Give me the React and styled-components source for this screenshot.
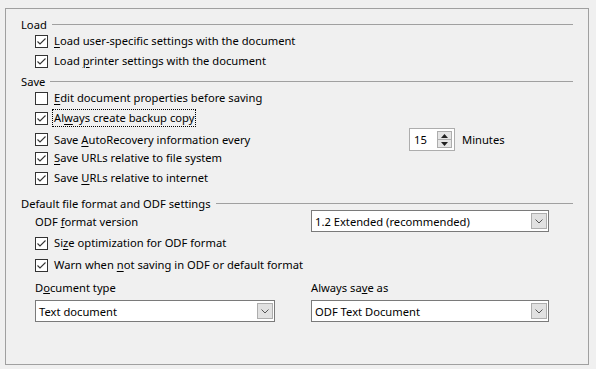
import React from "react";
import styled, { createGlobalStyle } from "styled-components";

const Global = createGlobalStyle`
  html, body {
    margin: 0;
    padding: 0;
    background: #f0f0f0;
  }
  body {
    font-family: "Noto Sans", "Open Sans", sans-serif;
    font-size: 11.2px;
    color: #000;
  }
`;

const Page = styled.div`
  width: 596px;
  height: 369px;
  box-sizing: border-box;
  padding: 8px 7px 4px 5px;
`;

const Frame = styled.div`
  height: 100%;
  box-sizing: border-box;
  border: 1px solid #a0a0a0;
  padding: 8px 15px 0 15px;
  display: flex;
  flex-direction: column;
`;

const Header = styled.div`
  display: flex;
  align-items: center;
  height: 14px;
  margin-top: ${(p) => p.gap || 0}px;

  &::after {
    content: "";
    flex: 1;
    height: 1px;
    background: #a0a0a0;
    margin-left: 5px;
  }
`;

const Rows = styled.div`
  display: flex;
  flex-direction: column;
  padding-left: 14px;
`;

const Row = styled.div`
  display: flex;
  align-items: center;
  height: ${(p) => p.h || 20}px;
`;

const Box = styled.span`
  width: 13px;
  height: 13px;
  box-sizing: border-box;
  border: 1px solid #333;
  background: #fff;
  flex-shrink: 0;
  display: flex;
  align-items: center;
  justify-content: center;
  margin-right: 5px;
`;

const Label = styled.span`
  white-space: nowrap;
  line-height: 14px;
  padding: 1px;
  margin-left: -1px;
  border: 1px dotted ${(p) => (p.focus ? "#000" : "transparent")};
  u {
    text-decoration: underline;
    text-underline-offset: 2px;
  }
`;

const Check = ({ on, focus, children }) => (
  <Row>
    <Box>
      {on && (
        <svg width="11" height="11" viewBox="0 0 11 11">
          <path d="M1.5 5.5 L4 8 L9.5 2.5" fill="none" stroke="#333" strokeWidth="1.1" />
        </svg>
      )}
    </Box>
    <Label focus={focus}>{children}</Label>
  </Row>
);

const SpinRow = styled.div`
  display: grid;
  grid-template-columns: 367px 46px auto;
  justify-content: start;
  align-items: center;
  column-gap: 7px;
  height: 20px;
`;

const Spin = styled.div`
  width: 46px;
  height: 23px;
  box-sizing: border-box;
  border: 1px solid #adadad;
  background: #fff;
  display: flex;
  align-items: center;
  justify-content: space-between;
  padding: 0 2px 0 4px;
`;

const SpinButtons = styled.div`
  width: 15px;
  height: 17px;
  display: flex;
  flex-direction: column;
  border: 1px solid #adadad;
  background: #e5e5e5;
  box-sizing: border-box;
`;

const SpinHalf = styled.div`
  flex: 1;
  display: flex;
  align-items: center;
  justify-content: center;
  & + & {
    border-top: 1px solid #adadad;
  }
`;

const Grid = styled.div`
  display: grid;
  grid-template-columns: 276px 238px;
  grid-template-rows: 22px 22px 22px 22px 24px;
  align-items: center;
  padding-left: 14px;
`;

const Wide = styled.div`
  grid-column: 1 / -1;
`;

const Select = styled.div`
  width: ${(p) => p.w}px;
  height: 22px;
  box-sizing: border-box;
  border: 1px solid #7a7a7a;
  background: #fff;
  display: flex;
  align-items: center;
  justify-content: space-between;
  padding: 0 1px 0 3px;
  white-space: nowrap;
  align-self: ${(p) => p.align || "center"};
`;

const Arrow = styled.div`
  width: 16px;
  height: 16px;
  box-sizing: border-box;
  border: 1px solid #adadad;
  background: #e1e1e1;
  display: flex;
  align-items: center;
  justify-content: center;
`;

const Dropdown = ({ w, align, children }) => (
  <Select w={w} align={align}>
    <span>{children}</span>
    <Arrow>
      <svg width="8" height="5" viewBox="0 0 8 5">
        <path d="M0.5 0.5 L4 4 L7.5 0.5" fill="none" stroke="#555" strokeWidth="1" />
      </svg>
    </Arrow>
  </Select>
);

const Tri = ({ up }) => (
  <svg width="7" height="4" viewBox="0 0 7 4">
    <path d={up ? "M0 4 L3.5 0 L7 4 Z" : "M0 0 L7 0 L3.5 4 Z"} fill="#222" />
  </svg>
);

export default function App() {
  return (
    <Page>
      <Global />
      <Frame>
        <Header>Load</Header>
        <Rows>
          <Check on><u>L</u>oad user-specific settings with the document</Check>
          <Check on>Load <u>p</u>rinter settings with the document</Check>
        </Rows>
        <Header gap={3}>Save</Header>
        <Rows>
          <Check><u>E</u>dit document properties before saving</Check>
          <Check on focus>Al<u>w</u>ays create backup copy</Check>
          <SpinRow>
            <Check on>Save <u>A</u>utoRecovery information every</Check>
            <Spin>
              <span>15</span>
              <SpinButtons>
                <SpinHalf><Tri up /></SpinHalf>
                <SpinHalf><Tri /></SpinHalf>
              </SpinButtons>
            </Spin>
            <span>Minutes</span>
          </SpinRow>
          <Check on><u>S</u>ave URLs relative to file system</Check>
          <Check on>Save <u>U</u>RLs relative to internet</Check>
        </Rows>
        <Header gap={8}>Default file format and ODF settings</Header>
        <Grid>
          <span>ODF <u>f</u>ormat version</span>
          <Dropdown w={238}>1.2 Extended (recommended)</Dropdown>
          <Wide><Check on>Si<u>z</u>e optimization for ODF format</Check></Wide>
          <Wide><Check on>Warn when <u>n</u>ot saving in ODF or default format</Check></Wide>
          <span>D<u>o</u>cument type</span>
          <span>Always sa<u>v</u>e as</span>
          <Dropdown w={240} align="end">Text document</Dropdown>
          <Dropdown w={238} align="end">ODF Text Document</Dropdown>
        </Grid>
      </Frame>
    </Page>
  );
}
